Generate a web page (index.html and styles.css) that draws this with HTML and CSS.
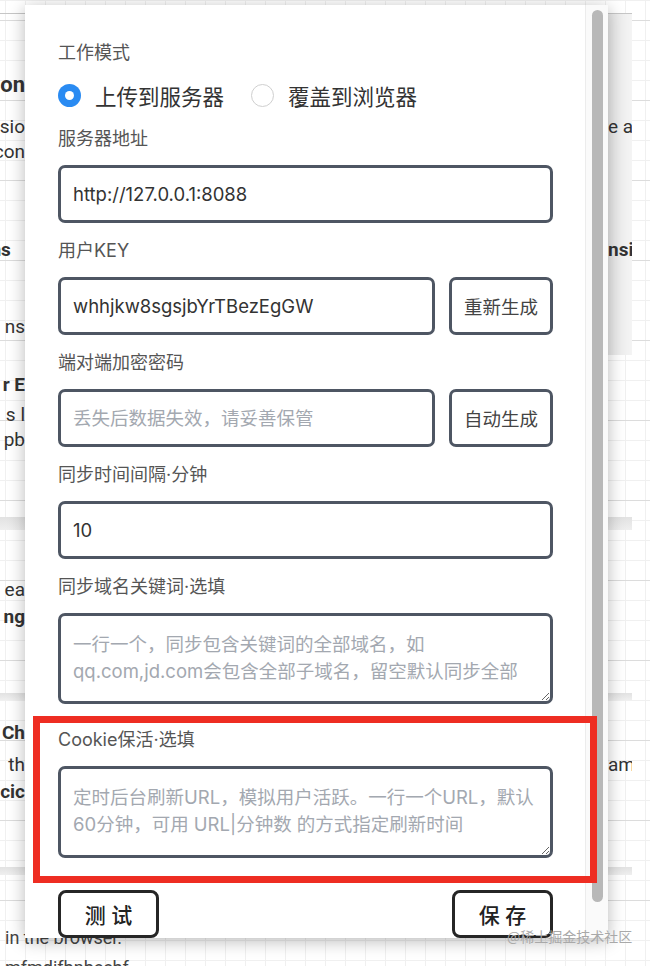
FILE: index.html
```html
<!DOCTYPE html>
<html lang="zh-CN">
<head>
<meta charset="utf-8">
<title>CookieCloud</title>
<link rel="stylesheet" href="styles.css">
</head>
<body>
<div class="bg">
  <div class="topbar"></div>
  <div class="card card1">
    <div class="bl b big"><div class="l"><span>Extension</span></div><div class="m"></div><div class="r"></div></div>
    <div class="bl"><div class="l"><span>Versio</span></div><div class="m"></div><div class="r">e allows</div></div>
    <div class="bl"><div class="l"><span>con</span></div><div class="m"></div><div class="r"></div></div>
    <div class="bl b"><div class="l"><span>Permissions&nbsp;&nbsp;&nbsp;</span></div><div class="m"></div><div class="r">nsions</div></div>
    <div class="bl"><div class="l"><span>ns</span></div><div class="m"></div><div class="r"></div></div>
  </div>
  <div class="card card1b">
    <div class="bl b"><div class="l"><span>r E</span></div><div class="m"></div><div class="r"></div></div>
    <div class="bl"><div class="l"><span>s l</span></div><div class="m"></div><div class="r"></div></div>
    <div class="bl"><div class="l"><span>pb</span></div><div class="m"></div><div class="r"></div></div>
  </div>
  <div class="band"></div>
  <div class="card card2">
    <div class="bl"><div class="l"><span>ea</span></div><div class="m"></div><div class="r"></div></div>
    <div class="bl b"><div class="l"><span>ng</span></div><div class="m"></div><div class="r"></div></div>
  </div>
  <div class="band band2"></div>
  <div class="card card3">
    <div class="bl b"><div class="l"><span>Ch</span></div><div class="m"></div><div class="r"></div></div>
    <div class="bl"><div class="l"><span>th</span></div><div class="m"></div><div class="r">am</div></div>
    <div class="bl b"><div class="l"><span>cic</span></div><div class="m"></div><div class="r"></div></div>
  </div>
  <div class="band band3"></div>
  <div class="card card4">
    <div class="wide">in the browser.</div>
    <div class="wide">mfmdifbnbcchf</div>
  </div>
</div>

<div class="popup">
  <div class="content">
    <div class="label">工作模式</div>
    <div class="radios">
      <div class="radio"><span class="dot on"></span><span>上传到服务器</span></div>
      <div class="radio"><span class="dot"></span><span>覆盖到浏览器</span></div>
    </div>
    <div class="fields">
      <div class="field">
        <div class="label">服务器地址</div>
        <input class="input" type="text" value="http://127.0.0.1:8088">
      </div>
      <div class="field">
        <div class="label">用户KEY</div>
        <div class="row">
          <input class="input" type="text" value="whhjkw8sgsjbYrTBezEgGW">
          <button class="btn">重新生成</button>
        </div>
      </div>
      <div class="field">
        <div class="label">端对端加密密码</div>
        <div class="row">
          <input class="input" type="text" placeholder="丢失后数据失效，请妥善保管">
          <button class="btn">自动生成</button>
        </div>
      </div>
      <div class="field">
        <div class="label">同步时间间隔·分钟</div>
        <input class="input" type="text" value="10">
      </div>
      <div class="field">
        <div class="label">同步域名关键词·选填</div>
        <textarea class="input area" placeholder="一行一个，同步包含关键词的全部域名，如&#10;qq.com,jd.com会包含全部子域名，留空默认同步全部"></textarea>
      </div>
      <div class="field cookie">
        <div class="label">Cookie保活·选填</div>
        <textarea class="input area tall" placeholder="定时后台刷新URL，模拟用户活跃。一行一个URL，默认&#10;60分钟，可用 URL|分钟数 的方式指定刷新时间"></textarea>
      </div>
    </div>
    <div class="actions">
      <button class="act">测 试</button>
      <button class="act">保 存</button>
    </div>
  </div>
  <div class="scroll"><div class="thumb"></div></div>
  <div class="mark"></div>
</div>

<div class="wm">@稀土掘金技术社区</div>
</body>
</html>
```

FILE: styles.css
```css
html, body {
  margin: 0;
  padding: 0;
}

body {
  width: 650px;
  height: 966px;
  overflow: hidden;
  position: relative;
  font-family: Roboto, "Noto Sans CJK SC", sans-serif;
  background-color: #fff;
  background-image:
    linear-gradient(to bottom, #dcdcdc 1px, transparent 1px),
    linear-gradient(to bottom, #f0f0f0 1px, transparent 1px),
    linear-gradient(to right, #f0f0f0 1px, transparent 1px);
  background-size: 100% 80px, 100% 20px, 20px 100%;
  background-position: 0 20px, 0 0, 5px 0;
}

/* background page */
.bg {
  width: 632px;
  display: flex;
  flex-direction: column;
}

.topbar {
  height: 13px;
  border-bottom: 1px solid #c6c6c6;
}

.card {
  display: grid;
  align-content: start;
  box-sizing: border-box;
}

.card1 {
  height: 341px;
  padding-top: 58px;
  grid-template-rows: 42px 25px 98px 77px 26px;
  background: linear-gradient(to right, transparent 608px, #e8e8e8 608px, #f4f4f4 632px);
}

.card1b {
  height: 162px;
  padding-top: 17px;
  grid-template-rows: 30px 25px 26px;
}

.band {
  height: 13px;
  background: linear-gradient(to bottom, #e2e2e2, #efefef);
}

.band2 {
  height: 7px;
}

.band3 {
  height: 8px;
}

.card2 {
  height: 163px;
  padding-top: 47px;
  grid-template-rows: 27px 26px;
}

.card3 {
  height: 167px;
  padding-top: 20px;
  grid-template-rows: 32px 27px 26px;
}

.card4 {
  padding-top: 50px;
  grid-template-rows: 30px 26px;
}

.bl {
  display: grid;
  grid-template-columns: 25px 583px 24px;
  height: 26px;
  line-height: 26px;
  font-size: 19px;
  color: #333;
  white-space: nowrap;
}

.bl .l {
  display: flex;
  justify-content: flex-end;
  overflow: hidden;
}

.bl .r {
  overflow: hidden;
}

.bl.b {
  font-weight: 700;
}

.bl.big {
  font-size: 22px;
}

.wide {
  padding-left: 5px;
  height: 26px;
  line-height: 26px;
  font-size: 18px;
  color: #444;
  white-space: nowrap;
}

/* popup */
.popup {
  position: absolute;
  left: 25px;
  top: 5px;
  width: 583px;
  height: 933px;
  background: #fff;
  box-shadow: 0 3px 16px rgba(0, 0, 0, 0.28);
  overflow: hidden;
  font-family: Inter, "Noto Sans CJK SC", sans-serif;
}

.content {
  padding: 36px 55px 0 33px;
  display: flex;
  flex-direction: column;
}

.label {
  font-size: 18px;
  line-height: 24px;
  color: #555;
}

.radios {
  display: flex;
  align-items: center;
  height: 30px;
  margin-top: 15px;
}

.radio {
  display: flex;
  align-items: center;
  gap: 14px;
  font-size: 21.5px;
  color: #333;
  margin-right: 27px;
}

.dot {
  width: 23px;
  height: 23px;
  border-radius: 50%;
  box-sizing: border-box;
  border: 1px solid #cfcfcf;
  background: #fff;
  flex: none;
}

.dot.on {
  background: #2a8bf2;
  border: none;
  display: flex;
  align-items: center;
  justify-content: center;
}

.dot.on::after {
  content: "";
  width: 9px;
  height: 9px;
  border-radius: 50%;
  background: #fff;
}

.fields {
  display: flex;
  flex-direction: column;
  gap: 16px;
  margin-top: 17px;
}

.field {
  display: flex;
  flex-direction: column;
  gap: 14px;
}

.field.cookie {
  margin-top: 8px;
}

.input {
  height: 58px;
  box-sizing: border-box;
  border: 3px solid #4e5663;
  border-radius: 7px;
  padding: 0 12px;
  font-family: inherit;
  font-size: 18.5px;
  color: #333;
  outline: none;
  background: #fff;
  margin: 0;
}

.input::placeholder {
  color: #a3a8b0;
}

.row {
  display: flex;
  gap: 14px;
}

.row .input {
  flex: 1;
  min-width: 0;
}

.btn {
  width: 104px;
  height: 58px;
  box-sizing: border-box;
  border: 3px solid #4e5663;
  border-radius: 7px;
  background: #fff;
  font-family: inherit;
  font-size: 18.5px;
  color: #444;
  padding: 0;
  flex: none;
}

.area {
  height: 91px;
  padding: 15px 6px 0 12px;
  line-height: 27px;
  display: block;
  width: 100%;
}

.area.tall {
  height: 92px;
}

.actions {
  display: flex;
  justify-content: space-between;
  margin-top: 32px;
}

.act {
  width: 101px;
  height: 48px;
  box-sizing: border-box;
  border: 3px solid #262626;
  border-radius: 8px;
  background: #fff;
  font-family: inherit;
  font-size: 21px;
  font-weight: 500;
  color: #222;
  padding: 0;
}

.scroll {
  position: absolute;
  right: 0;
  top: 0;
  bottom: 0;
  width: 22px;
  background: #fafafa;
  border-left: 1px solid #ececec;
}

.thumb {
  position: absolute;
  left: 6px;
  top: 5px;
  width: 11px;
  height: 892px;
  border-radius: 6px;
  background: #b8b8b8;
}

.mark {
  position: absolute;
  left: 8px;
  top: 711px;
  width: 564px;
  height: 167px;
  box-sizing: border-box;
  border: 7px solid #ee2d22;
  pointer-events: none;
}

.wm {
  position: absolute;
  left: 507px;
  top: 927px;
  font-family: "Noto Sans CJK SC", sans-serif;
  font-size: 14px;
  line-height: 18px;
  color: #a9a9a9;
  white-space: nowrap;
}
```
